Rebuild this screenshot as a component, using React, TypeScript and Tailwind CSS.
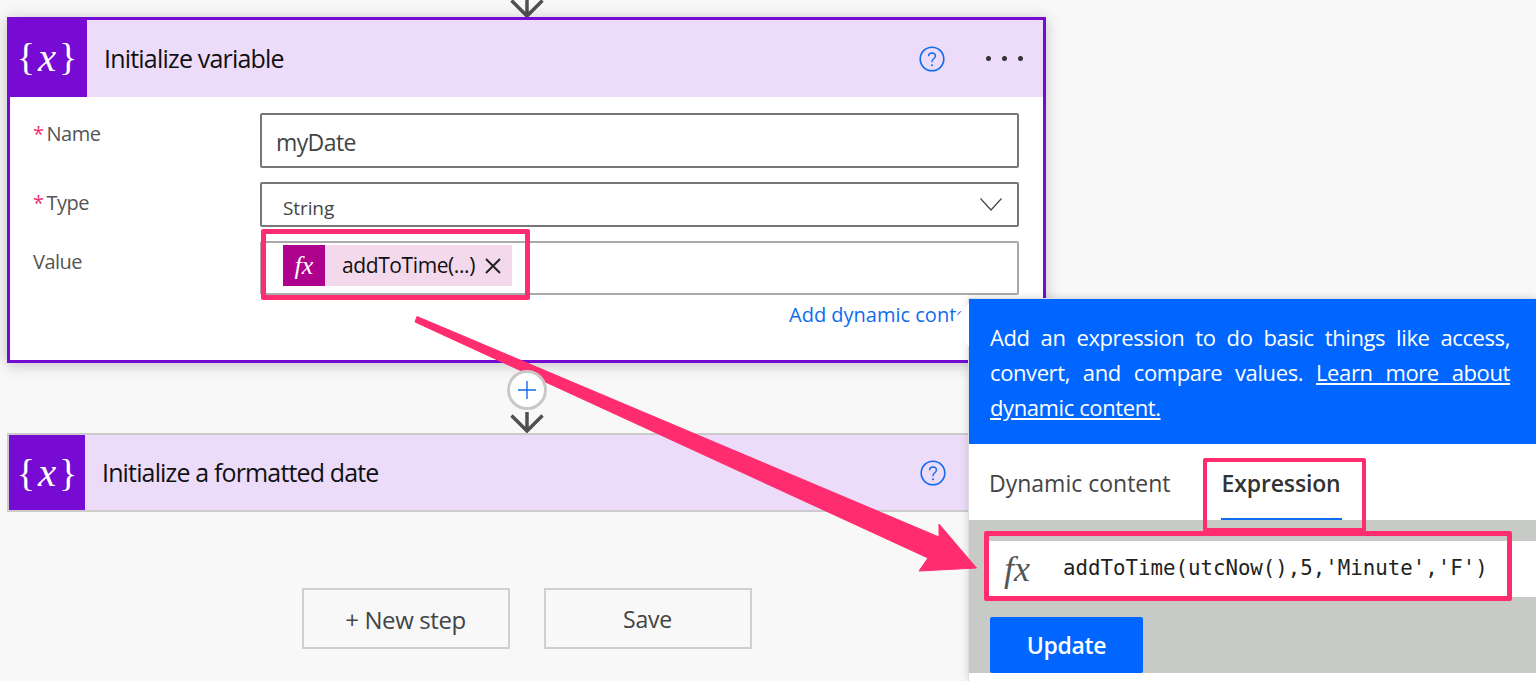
const sans = 'font-["Open_Sans",sans-serif]';

function VarIcon({ wide }: { wide?: boolean }) {
  return (
    <div className={`flex h-full shrink-0 items-center justify-center bg-[#770bd4] font-["Liberation_Serif",serif] text-[38px] leading-none text-white ${wide ? 'w-[80px]' : 'w-[76px]'}`}>
      <span className="font-light">{'{'}</span>
      <span className="px-[3px] text-[41px] italic">x</span>
      <span className="font-light">{'}'}</span>
    </div>
  );
}

function HelpIcon() {
  return (
    <svg width="26" height="26" viewBox="0 0 26 26" fill="none" className="shrink-0">
      <circle cx="13" cy="13" r="11.8" stroke="#0f6cf0" strokeWidth="1.6" />
      <path d="M9.6 10.2c0-2 1.5-3.2 3.4-3.2s3.4 1.2 3.4 3c0 1.500-.9 2.200-1.900 3-.9.7-1.500 1.300-1.500 2.500v.8" stroke="#0f6cf0" strokeWidth="1.4" />
      <circle cx="13" cy="19.300" r="1" fill="#0f6cf0" />
    </svg>
  );
}

function FlowArrow() {
  return (
    <svg width="34" height="21" viewBox="0 0 34 21" fill="none" className="block">
      <path d="M17 0v19M1.500 3.500L17 19L32.500 3.500" stroke="#505050" strokeWidth="3.5" />
    </svg>
  );
}

function Field({ label, required, boxClass, children }: { label: string; required?: boolean; boxClass: string; children: React.ReactNode }) {
  return (
    <div className="flex">
      <div className="relative w-[227px] shrink-0 pt-[7px] text-[20px] leading-[28px] tracking-[-0.5px] text-[#555]">
        {required && <span className="mr-[3px] text-[#ef2f6e]">*</span>}
        {label}
      </div>
      <div className={`w-[759px] rounded-[2px] bg-white ${boxClass}`}>{children}</div>
    </div>
  );
}

export default function App() {
  return (
    <div className={`relative h-[681px] w-[1536px] overflow-hidden bg-[#f8f8f8] ${sans}`}>
      <div className="flex w-[1046px] flex-col pl-[7px]">
        {/* Top connector */}
        <div className="flex h-[17px] items-end justify-center overflow-hidden">
          <div className="-mb-[1px]"><FlowArrow /></div>
        </div>

        {/* Expanded action card */}
        <div className="h-[346px] border-[3px] border-[#770bd4] bg-white shadow-[0_2px_14px_rgba(0,0,0,0.22)]">
          <div className="flex h-[77px] items-center bg-[#ecdcf9]">
            <div className="-mt-[3px] -ml-[3px] h-[80px]"><VarIcon wide /></div>
            <div className="ml-[17px] flex-1 text-[25px] tracking-[-0.8px] text-[#111]">Initialize variable</div>
            <div className="mr-[20px] flex items-center gap-[41px]">
              <HelpIcon />
              <div className="flex gap-[11px]">
                <span className="size-[5px] rounded-full bg-[#333]" />
                <span className="size-[5px] rounded-full bg-[#333]" />
                <span className="size-[5px] rounded-full bg-[#333]" />
              </div>
            </div>
          </div>

          <div className="flex flex-col pt-[16px] pl-[23px]">
            <Field label="Name" required boxClass="flex h-[55px] items-center border-2 border-[#777] px-[14px] pt-[4px] text-[23px] tracking-[-0.6px] text-[#444]">
              myDate
            </Field>
            <div className="mt-[14px]">
              <Field label="Type" required boxClass="flex h-[45px] items-center justify-between border-2 border-[#777] pl-[21px] pr-[15px] pt-[7px] text-[19px] tracking-[-0.1px] text-[#444]">
                String
                <svg width="22" height="13" viewBox="0 0 22 13" fill="none" className="-mt-[7px]">
                  <path d="M.5.5L11 12L21.500.5" stroke="#444" strokeWidth="1.200" />
                </svg>
              </Field>
            </div>
            <div className="mt-[14px]">
              <Field label="Value" boxClass="flex h-[54px] items-start border-2 border-[#aaa] pl-[21px] pt-[2px]">
                <div className="flex h-[41px] w-[229px] items-center bg-[#f4d9ec] text-[#111]">
                  <div className="flex h-full w-[42px] items-center justify-center bg-[#ae028e] font-['Liberation_Serif',serif] text-[26px] text-white italic">
                    fx
                  </div>
                  <span className="ml-[17px] text-[21px] tracking-[-0.4px]">addToTime(...)</span>
                  <svg width="16" height="16" viewBox="0 0 16 16" className="ml-[10px]">
                    <path d="M1 1l14 14M15 1L1 15" stroke="#222" strokeWidth="2" />
                  </svg>
                </div>
              </Field>
            </div>
            <div className="mt-[5px] pl-[756px]">
              <span className="whitespace-nowrap text-[20px] text-[#0f6cf0]">Add dynamic content</span>
            </div>
          </div>
        </div>

        {/* Connector with add button */}
        <div className="flex h-[70px] flex-col items-center">
          <div className="z-10 mt-[7px] flex size-[40px] items-center justify-center rounded-full border-[3px] border-[#c8c8c8] bg-white">
            <svg width="18" height="18" viewBox="0 0 18 18"><path d="M9 0v18M0 9h18" stroke="#0f6cf0" strokeWidth="1.4" /></svg>
          </div>
          <div className="z-10 mt-[2px]"><FlowArrow /></div>
        </div>

        {/* Collapsed action card */}
        <div className="flex h-[79px] items-center border-2 border-[#cbcbcb] bg-[#ecdcf9]">
          <VarIcon />
          <div className="ml-[17px] flex-1 text-[25px] tracking-[-0.85px] text-[#111]">Initialize a formatted date</div>
          <div className="mr-[98px]"><HelpIcon /></div>
        </div>

        {/* Footer buttons */}
        <div className="mt-[76px] flex justify-center gap-[34px]">
          <div className="flex h-[61px] w-[208px] items-center justify-center border-2 border-[#cfcfcf] pt-[2px] text-[24px] tracking-[-0.4px] text-[#444]">+ New step</div>
          <div className="flex h-[61px] w-[208px] items-center justify-center border-2 border-[#cfcfcf] pt-[2px] text-[23px] tracking-[-0.2px] text-[#444]">Save</div>
        </div>
      </div>

      {/* Dynamic content panel */}
      <div className="absolute top-[298px] left-[968px] h-[383px] w-[568px] border-t border-l border-[#ddd] bg-white shadow-[0_0_8px_rgba(0,0,0,0.15)]">
        <div className="absolute top-[4px] -left-[20px] size-0 border-y-[22px] border-r-[20px] border-y-transparent border-r-white" />
        <div className="h-[145px] bg-[#0066ff] pt-[21px] pr-[26px] pl-[21px] text-justify text-[22px] leading-[35px] tracking-[-0.4px] text-white">
          Add an expression to do basic things like access, convert, and compare values. <span className="underline">Learn more about dynamic content.</span>
        </div>
        <div className="flex h-[76px] items-start gap-[50px] pl-[20px] text-[23px]">
          <div className="pt-[22px] text-[#444]">Dynamic content</div>
          <div className="flex h-[76px] flex-col items-center pt-[22px] font-semibold tracking-[-0.15px] text-[#333]">
            Expression
            <div className="mt-[17px] h-[4px] w-[121px] bg-[#0f6cf0]" />
          </div>
        </div>
        <div className="flex h-[153px] flex-col bg-[#c8cac8] pt-[21px]">
          <div className="ml-[16px] flex h-[56px] items-center bg-white">
            <span className="ml-[19px] font-['Liberation_Serif',serif] text-[36px] leading-none text-[#555] italic">fx</span>
            <span className="ml-[33px] font-['DejaVu_Sans_Mono',monospace] text-[20.75px] whitespace-nowrap text-[#222]">addToTime(utcNow(),5,'Minute','F')</span>
          </div>
          <div className="mt-[20px] ml-[21px] flex h-[56px] w-[153px] items-center justify-center rounded-[2px] bg-[#0066ff] text-[23px] font-semibold tracking-[-0.3px] text-white">
            Update
          </div>
        </div>
      </div>

      {/* Annotation highlights */}
      <div className="absolute top-[229px] left-[261px] h-[71px] w-[269px] rounded-[2px] border-[5px] border-[#ff2d6f]" />
      <div className="absolute top-[458px] left-[1203px] h-[74px] w-[163px] rounded-[2px] border-[4px] border-[#ff2d6f]" />
      <div className="absolute top-[531px] left-[984px] h-[70px] w-[528px] rounded-[2px] border-[5px] border-[#ff2d6f]" />

      {/* Annotation arrow */}
      <svg width="1536" height="681" viewBox="0 0 1536 681" className="absolute top-0 left-0">
        <path d="M417 316.500L939 537L939 524L976.500 568L919 571L928 558L415 322Z" fill="#ff2d6f" stroke="#ff2d6f" strokeWidth="1" strokeLinejoin="round" />
      </svg>
    </div>
  );
}
